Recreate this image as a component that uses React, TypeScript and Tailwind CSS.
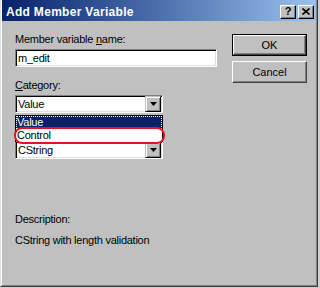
import React from 'react';

const font = { fontFamily: '"Liberation Sans", Arial, sans-serif' };

function ArrowButton() {
  return (
    <div className="w-[16px] h-[16px] bg-[#c0c0c0] border border-t-[#c0c0c0] border-l-[#c0c0c0] border-b-[#000] border-r-[#000] shadow-[inset_1px_1px_0_#fff,inset_-1px_-1px_0_#808080] flex items-center justify-center">
      <svg width="7" height="4" viewBox="0 0 7 4"><path d="M0 0h7L3.5 4z" fill="#000" /></svg>
    </div>
  );
}

function Combo({ value }: { value: string }) {
  return (
    <div className="w-[148px] h-[18px] bg-white border border-t-[#808080] border-l-[#808080] border-b-white border-r-white shadow-[inset_1px_1px_0_#000,inset_-1px_-1px_0_#dfdfdf] flex items-center justify-between pl-[2px] pr-[1px]">
      <span className="text-[11px] leading-[13px] text-black">{value}</span>
      <ArrowButton />
    </div>
  );
}

function PushButton({ label, isDefault }: { label: string; isDefault?: boolean }) {
  return (
    <div className={`w-[75px] h-[22px] ${isDefault ? 'border border-black' : ''}`}>
      <div className="w-full h-full bg-[#c0c0c0] border border-t-white border-l-white border-b-[#404040] border-r-[#404040] shadow-[inset_-1px_-1px_0_#808080] flex items-center justify-center text-[11px] text-black">
        {label}
      </div>
    </div>
  );
}

export default function App() {
  return (
    <div className="w-[320px] h-[288px] bg-[#cfcfcf]" style={font}>
      <div className="w-[318px] h-[287px] bg-[#c0c0c0] border-l border-l-[#dfdfdf] border-r border-r-[#404040] border-b border-b-[#404040]">
        <div className="h-full flex flex-col border-l border-l-white border-r border-r-[#808080] border-b border-b-[#808080]">
          {/* title bar */}
          <div className="h-[21px] bg-gradient-to-r from-[#08216b] to-[#9cc2ee] flex items-center justify-between pl-[4px] pr-[2px] pt-[2px]">
            <span className="text-white font-bold text-[12px] tracking-[0.3px] leading-[14px]">Add Member Variable</span>
            <div className="flex gap-[2px]">
              <div className="w-[16px] h-[14px] bg-[#c0c0c0] border border-t-white border-l-white border-b-black border-r-black shadow-[inset_-1px_-1px_0_#808080] flex items-center justify-center text-[11px] font-bold leading-[11px] text-black">?</div>
              <div className="w-[16px] h-[14px] bg-[#c0c0c0] border border-t-white border-l-white border-b-black border-r-black shadow-[inset_-1px_-1px_0_#808080] flex items-center justify-center">
                <svg width="8" height="7" viewBox="0 0 8 7"><path d="M0.5 0.5L7.5 6.5M7.5 0.5L0.5 6.5" stroke="#000" strokeWidth="1.6" /></svg>
              </div>
            </div>
          </div>

          {/* client */}
          <div className="flex-1 flex pl-[13px]">
            <div className="w-[202px] flex flex-col text-[11px] leading-[13px] tracking-[-0.25px] text-black">
              <div className="mt-[12px]">Member variable <span className="underline">n</span>ame:</div>
              <div className="mt-[3px] h-[18px] w-[202px] bg-white border border-t-[#808080] border-l-[#808080] border-b-white border-r-white shadow-[inset_1px_1px_0_#000,inset_-1px_-1px_0_#dfdfdf] flex items-center pl-[2px]">
                m_edit
              </div>
              <div className="mt-[12px]"><span className="underline">C</span>ategory:</div>
              <div className="mt-[3px] relative">
                <Combo value="Value" />
                <div className="absolute left-0 top-[20px] w-[148px] h-[27px] bg-white border-t border-l border-r border-black z-10 flex flex-col">
                  <div className="h-[13px] bg-[#08216b] text-white pl-[1px] outline-1 outline-dotted outline-white -outline-offset-1 leading-[13px]">Value</div>
                  <div className="h-[13px] pl-[1px] leading-[13px]">Control</div>
                  <div className="absolute left-[-2px] top-[11px] w-[151px] h-[17px] border-2 border-[#e0161c] rounded-[8px]" />
                </div>
                <div className="mt-[28px]">
                  <Combo value="CString" />
                </div>
              </div>
              <div className="mt-[54px]">Description:</div>
              <div className="mt-[8px] whitespace-nowrap">CString with length validation</div>
            </div>
            <div className="ml-[15px] flex flex-col gap-[5px] pt-[13px]">
              <PushButton label="OK" isDefault />
              <PushButton label="Cancel" />
            </div>
          </div>
        </div>
      </div>
    </div>
  );
}
